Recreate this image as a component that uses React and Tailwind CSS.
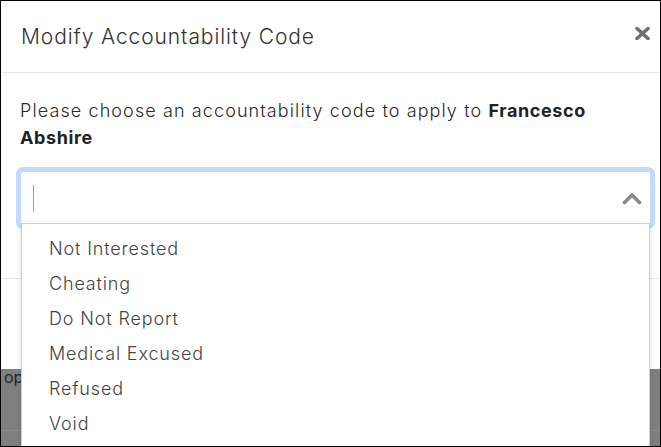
import React from 'react';

const options = ['Not Interested', 'Cheating', 'Do Not Report', 'Medical Excused', 'Refused', 'Void'];

const CloseIcon = () => (
  <svg width="15" height="13" viewBox="0 0 15 13" className="mb-[7px] text-[#707070]">
    <path d="M2 1.5 L13 11.5 M13 1.5 L2 11.5" stroke="currentColor" strokeWidth="3.6" strokeLinecap="round" />
  </svg>
);

const ChevronUp = () => (
  <svg width="20" height="13" viewBox="0 0 20 13" className="text-[#8a8a8a]">
    <path d="M2.5 10.5 L10 3 L17.5 10.5" stroke="currentColor" strokeWidth="3.6" fill="none" strokeLinecap="round" strokeLinejoin="round" />
  </svg>
);

const App = () => {
  return (
    <div className="relative h-[447px] w-[661px] overflow-hidden border border-black bg-[#7f7f7f] font-['Inter',sans-serif]">
      {/* Modal */}
      <div className="flex h-[368px] flex-col bg-white">
        {/* Header */}
        <div className="flex h-[72px] shrink-0 items-center justify-between border-b border-[#e6e6e6] pl-5 pr-[10px]">
          <h2 className="text-[21px] font-light tracking-[0.9px] text-[#333]">Modify Accountability Code</h2>
          <CloseIcon />
        </div>

        {/* Body */}
        <div className="h-[205px] shrink-0 pl-[15px] pr-[5px] pt-[24px]">
          <p className="w-[600px] pl-1 text-[18px] font-light leading-[27px] tracking-[1.1px] text-[#2a2a2a]">
            Please choose an accountability code to apply to{' '}
            <b className="font-bold tracking-[0.6px] text-[#222]">Francesco</b>{' '}
            <b className="font-bold tracking-[0.6px] text-[#222]">Abshire</b>
          </p>
          <div className="mt-[16px] flex h-[62px] items-center justify-between rounded-[7px] border-[5px] border-[#c0dcfa] pl-3 pr-[8px]">
            <span className="h-[27px] w-px bg-[#999]" />
            <ChevronUp />
          </div>
        </div>

        {/* Footer */}
        <div className="flex-1 border-t border-[#e6e6e6]" />
      </div>

      {/* Backdrop page */}
      <div className="relative h-[60px]">
        <span className="absolute left-[3px] top-[-4px] text-[16px] text-[#1c2636]">op</span>
        <div className="absolute left-0 right-0 top-[61px] border-t border-[#8c8c8c]" />
      </div>

      {/* Dropdown menu */}
      <div className="absolute left-[20px] top-[222px] w-[629px] border border-[#cfcfcf] bg-white shadow-[0_2px_6px_rgba(0,0,0,0.12)]">
        <ul className="pt-[7px] pb-4">
          {options.map((opt) => (
            <li key={opt} className="h-[35px] pl-[27px] text-[18px] font-light leading-[35px] tracking-[0.85px] text-[#444]">
              {opt}
            </li>
          ))}
        </ul>
      </div>
    </div>
  );
};

export default App;
